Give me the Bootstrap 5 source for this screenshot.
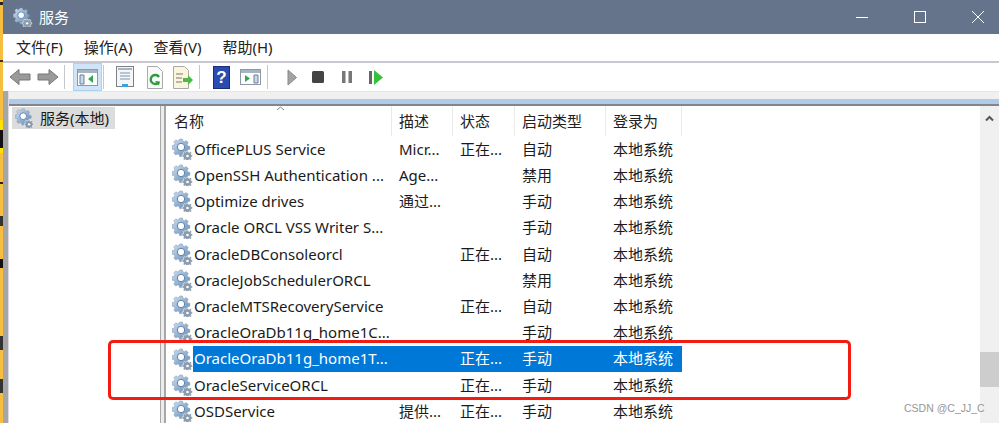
<!DOCTYPE html>
<html lang="zh"><head><meta charset="utf-8"><title>服务</title>
<link href="https://cdn.jsdelivr.net/npm/bootstrap@5.3.0/dist/css/bootstrap.min.css" rel="stylesheet">
<style>
html,body{margin:0;height:423px;overflow:hidden;background:#fff}
body{font-family:"Noto Sans","Noto Sans CJK SC",sans-serif;font-size:15px;color:#1a1a1a;position:relative}
.shell{height:423px;width:999px}
.desk{width:3px;flex:none;background:linear-gradient(#f7bd3e 0,#111 0 0,#f7bd3e 0 2px,#222 2px 5px,#f7bd3e 5px 60px,#333 60px 62px,#f7bd3e 62px 120px,#ffe000 120px 130px,#111 130px 148px,#ffe000 148px 153px,#f7bd3e 153px 182px,#222 182px 184px,#f7bd3e 184px 216px,#333 216px 226px,#f7bd3e 226px 259px,#111 259px 268px,#f7bd3e 268px 336px,#333 336px 350px,#f7bd3e 350px 379px,#333 379px 393px,#f7bd3e 393px)}
.maincol{flex:1 1 auto;min-width:0}
.tbar{height:34px;background:#65748a;color:#fff;font-size:15px;padding-left:10px;gap:6px}
.winbtns svg{display:block}
.winbtns span{width:58px;display:flex;justify-content:center}
.winbtns span:last-child{width:50px;justify-content:flex-start;padding-left:22px}
.menubar{height:27px;gap:21px;padding-left:13px;font-size:15px;color:#222}
.toolrow{height:30px;border-top:2px solid #c9c7cf;padding-left:2px}
.tsep{width:1px;height:24px;background:#c8c8c8;flex:none}
.tico{width:28px;height:28px;display:flex;align-items:center;justify-content:center;flex:none}
.tico.narrow{width:24px}
.tico.wide{width:29px}
.tico.on{background:#cfe5f7;border:1px solid #a9d2f2}
.g1{margin-left:1px}.g2{margin-left:2px}.g3{margin-left:3px}.g4{margin-left:4.5px}.g5{margin-left:5.5px}.g6{margin-left:6px}.g7{margin-left:7px}.g8{margin-left:8px}.g12{margin-left:12px}
.lowerwrap{flex:1 1 auto;min-height:0}
.greybar{width:5px;flex:none;background:#a6a6a8;border-right:0}
.lowercol{flex:1 1 auto;min-width:0;border-left:1px solid #dcdce0}
.stripe{height:8px;background:#f0f0f0;border-top:1px solid #e6e6e6}
.blueb{height:5px;background:#b0cbe7}
.panes{height:319px;border-top:2px solid #84848c}
.leftp{width:151px;padding:0 0 0 3px;flex:none}
.treeitem{height:22px;background:#dcdcdc;margin-top:1px;padding:0 3px 0 3px;gap:5px;width:103px;white-space:nowrap;font-size:15px}
.midgap{width:6px;flex:none;background:#ececee;border-left:1px solid #a8a8a8;border-right:2px solid #a8a8a8}
.rightp{flex:1 1 auto;position:relative;padding-left:5px;overflow:hidden}
.hdr{height:30px;position:relative}
.hcell{height:30px;display:flex;align-items:center;border-right:1px solid #e9e9e9;flex:none;color:#222}
.sortc{position:absolute;left:105px;top:0}
.sortc svg{display:block}
.hcell,.cellx{padding-left:7px}
.hcell.c1{padding-left:3px}
.c1{width:221px}.c2{width:61px}.c3{width:62px}.c4{width:91px}.c5{width:76px}
.rowx{height:26.2px;white-space:nowrap}
.cellx{flex:none;height:100%;display:flex;align-items:center;overflow:hidden}
.c0{width:22px;flex:none;display:flex;align-items:center;padding-left:1px}
.c0 svg{flex:none}
.cn{width:199px;flex:none;padding-left:1px;height:100%;display:flex;align-items:center}
.rowx.sel .cn,.rowx.sel .cellx{background:#0078d7;color:#fff}
.sb{width:19px;flex:none;background:#f0f0f0;position:relative;margin-left:auto}
.sbup{height:24px;display:flex;align-items:center;justify-content:center}
.sbthumb{position:absolute;top:246px;left:0;right:0;height:35px;background:#cdcdcd}
.redbox{position:absolute;left:108px;top:340px;width:743px;height:60px;border:3px solid #f31c12;border-radius:5px;pointer-events:none}
.wm{position:absolute;left:904px;top:401px;font-family:"Liberation Sans",sans-serif;font-size:10.5px;color:#969696}
</style></head><body>
<svg width="0" height="0" class="position-absolute"><defs>
<linearGradient id="gr" x1="0" y1="0" x2="1" y2="1"><stop offset="0" stop-color="#cfe0f2"/><stop offset="1" stop-color="#5f86b3"/></linearGradient>
<symbol id="gear" viewBox="0 0 22 22">
<g fill="url(#gr)" stroke="#7b95b2" stroke-width=".5">
<path d="M7.6 1h2.8l.4 2 1.6.7 1.8-1.1 2 2-1.1 1.8.7 1.6 2 .4v2.8l-2 .4-.7 1.6 1.1 1.8-2 2-1.8-1.1-1.6.7-.4 2H7.6l-.4-2-1.6-.7-1.8 1.1-2-2 1.1-1.8-.7-1.6-2-.4V7.6l2-.4.7-1.6-1.1-1.8 2-2 1.8 1.1 1.6-.7z"/>
</g>
<circle cx="9" cy="9" r="3.7" fill="#fff" stroke="#4f76a0" stroke-width=".9"/>
<path d="M14.6 13.2h1.8l.3 1.2 1-.1.8-.7 1.2 1.2-.7 1 .4 1 1.2.3v1.7l-1.2.3-.4 1 .7 1-1.2 1.2-1-.7-1 .4-.2.6h-1.9l-.2-.6-1-.4-1 .7-1.2-1.2.7-1-.4-1-1.2-.3v-1.7l1.2-.3.4-1-.7-1 1.2-1.2 1 .7 1-.4z" fill="#8a9bad" stroke="#fff" stroke-width=".6"/>
<circle cx="15.5" cy="18" r="1.3" fill="#fff"/>
</symbol>
</defs></svg>
<div class="shell d-flex">
<div class="desk"></div>
<div class="maincol d-flex flex-column">
 <div class="tbar d-flex align-items-center">
  <svg width="20" height="20"><use href="#gear"/></svg><span>服务</span>
  <div class="winbtns d-flex ms-auto align-items-center">
   <span><svg width="14" height="14"><path d="M1 7.500h12" stroke="#fff"/></svg></span>
   <span><svg width="14" height="14"><rect x="1.500" y="1.500" width="11" height="11" fill="none" stroke="#fff"/></svg></span>
   <span><svg width="14" height="14"><path d="M1 1l12 12M13 1L1 13" stroke="#fff"/></svg></span>
  </div>
 </div>
 <div class="menubar d-flex align-items-center"><span>文件(F)</span><span>操作(A)</span><span>查看(V)</span><span>帮助(H)</span></div>
 <div class="toolrow d-flex align-items-center">
  <span class="tico wide"><svg width="22" height="18"><path d="M1 9l9-7.500V6h11v6H10v4.500z" fill="#9a9a9a" stroke="#777"/></svg></span>
  <span class="tico"><svg width="22" height="18"><path d="M21 9l-9-7.500V6H1v6h11v4.500z" fill="#9a9a9a" stroke="#777"/></svg></span>
  <span class="tsep g2"></span>
  <span class="tico wide on g8"><svg width="21" height="19"><rect x=".5" y="1.500" width="20" height="16" fill="#fff" stroke="#8d99a6"/><rect x="1" y="2" width="19" height="3" fill="#a7b4c2"/><path d="M3 7h4v9H3z" fill="#c9d9e9" stroke="#6c7f93"/><path d="M16 7v8l-5-4z" fill="#33a852"/></svg></span>
  <span class="tsep g1"></span>
  <span class="tico wide g6"><svg width="20" height="24"><rect x="1.500" y="1.500" width="17" height="20" fill="#f4f6f8" stroke="#7f7f86"/><rect x="3" y="3" width="14" height="2" fill="#a9b4c0"/><path d="M5 8h10M5 11h10M5 14h10" stroke="#7c96ae"/><rect x="7" y="19" width="6" height="3" fill="#36a3dc"/></svg></span>
  <span class="tico g2"><svg width="18" height="23"><path d="M1.500 .5h10l5 5v17h-15z" fill="#fafafa" stroke="#aaa"/><path d="M13 11a4.500 4.500 0 1 0-1 6" fill="none" stroke="#2d9a3c" stroke-width="2.400"/><path d="M9 15l5 .5-1 4z" fill="#2d9a3c"/></svg></span>
  <span class="tico"><svg width="22" height="23"><path d="M1.500 .5h11l4 4v18h-15z" fill="#fbf5dc" stroke="#aaa"/><path d="M4 8h7M4 12h6M4 16h6" stroke="#777"/><path d="M11 12h5V9l5 5-5 5v-3h-5z" fill="#4fb848"/></svg></span>
  <span class="tsep g2"></span>
  <span class="tico g7"><svg width="17" height="23"><rect x=".5" y=".5" width="16" height="22" fill="#2a4bb0" stroke="#1a2e78"/><text x="8.500" y="17" text-anchor="middle" font-family="Liberation Sans" font-weight="700" font-size="17" fill="#fff">?</text></svg></span>
  <span class="tico g1"><svg width="21" height="18"><rect x=".5" y="1.500" width="20" height="15" fill="#fff" stroke="#8d99a6"/><rect x="1" y="2" width="19" height="3" fill="#a7b4c2"/><path d="M5 7v7l5-3.500z" fill="#33a852"/><path d="M14 7h4v8h-4z" fill="#c9d9e9" stroke="#6c7f93"/></svg></span>
  <span class="tsep g3"></span>
  <span class="tico narrow g12"><svg width="11" height="17"><path d="M1 1l8.500 7.500L1 16z" fill="#a3a3a3" stroke="#8a8a8a"/></svg></span>
  <span class="tico narrow g2"><svg width="14" height="14"><rect x="1" y="1" width="12" height="12" rx="1.500" fill="#444"/></svg></span>
  <span class="tico narrow g4"><svg width="12" height="14"><path d="M1 1h3.500v12H1zM7.500 1H11v12H7.500z" fill="#777"/></svg></span>
  <span class="tico narrow g5"><svg width="16" height="15"><path d="M1 1h3v13H1z" fill="#666"/><path d="M6 0l9 7.500L6 15z" fill="#37c13a"/></svg></span>
 </div>
 <div class="lowerwrap d-flex">
 <div class="greybar"></div>
 <div class="lowercol d-flex flex-column">
 <div class="stripe"></div>
 <div class="blueb"></div>
 <div class="panes d-flex">
  <div class="leftp"><div class="treeitem d-flex align-items-center"><svg width="20" height="20"><use href="#gear"/></svg><span>服务(本地)</span></div></div>
  <div class="midgap"></div>
  <div class="rightp d-flex">
   <div class="flex-grow-1">
    <div class="hdr d-flex"><span class="sortc"><svg width="9" height="5"><path d="M1 4l3.500-3L8 4" fill="none" stroke="#888"/></svg></span>
     <div class="hcell c1">名称</div><div class="hcell c2">描述</div><div class="hcell c3">状态</div><div class="hcell c4">启动类型</div><div class="hcell c5">登录为</div></div>
    <div class="rowx d-flex"><div class="c0"><svg width="22" height="22"><use href="#gear"/></svg></div><div class="cn">OfficePLUS Service</div><div class="cellx c2">Micr...</div><div class="cellx c3">正在...</div><div class="cellx c4">自动</div><div class="cellx c5">本地系统</div></div>
    <div class="rowx d-flex"><div class="c0"><svg width="22" height="22"><use href="#gear"/></svg></div><div class="cn">OpenSSH Authentication ...</div><div class="cellx c2">Age...</div><div class="cellx c3"></div><div class="cellx c4">禁用</div><div class="cellx c5">本地系统</div></div>
    <div class="rowx d-flex"><div class="c0"><svg width="22" height="22"><use href="#gear"/></svg></div><div class="cn">Optimize drives</div><div class="cellx c2">通过...</div><div class="cellx c3"></div><div class="cellx c4">手动</div><div class="cellx c5">本地系统</div></div>
    <div class="rowx d-flex"><div class="c0"><svg width="22" height="22"><use href="#gear"/></svg></div><div class="cn">Oracle ORCL VSS Writer S...</div><div class="cellx c2"></div><div class="cellx c3"></div><div class="cellx c4">手动</div><div class="cellx c5">本地系统</div></div>
    <div class="rowx d-flex"><div class="c0"><svg width="22" height="22"><use href="#gear"/></svg></div><div class="cn">OracleDBConsoleorcl</div><div class="cellx c2"></div><div class="cellx c3">正在...</div><div class="cellx c4">自动</div><div class="cellx c5">本地系统</div></div>
    <div class="rowx d-flex"><div class="c0"><svg width="22" height="22"><use href="#gear"/></svg></div><div class="cn">OracleJobSchedulerORCL</div><div class="cellx c2"></div><div class="cellx c3"></div><div class="cellx c4">禁用</div><div class="cellx c5">本地系统</div></div>
    <div class="rowx d-flex"><div class="c0"><svg width="22" height="22"><use href="#gear"/></svg></div><div class="cn">OracleMTSRecoveryService</div><div class="cellx c2"></div><div class="cellx c3">正在...</div><div class="cellx c4">自动</div><div class="cellx c5">本地系统</div></div>
    <div class="rowx d-flex"><div class="c0"><svg width="22" height="22"><use href="#gear"/></svg></div><div class="cn">OracleOraDb11g_home1C...</div><div class="cellx c2"></div><div class="cellx c3"></div><div class="cellx c4">手动</div><div class="cellx c5">本地系统</div></div>
    <div class="rowx sel d-flex"><div class="c0"><svg width="22" height="22"><use href="#gear"/></svg></div><div class="cn">OracleOraDb11g_home1T...</div><div class="cellx c2"></div><div class="cellx c3">正在...</div><div class="cellx c4">手动</div><div class="cellx c5">本地系统</div></div>
    <div class="rowx d-flex"><div class="c0"><svg width="22" height="22"><use href="#gear"/></svg></div><div class="cn">OracleServiceORCL</div><div class="cellx c2"></div><div class="cellx c3">正在...</div><div class="cellx c4">手动</div><div class="cellx c5">本地系统</div></div>
    <div class="rowx d-flex"><div class="c0"><svg width="22" height="22"><use href="#gear"/></svg></div><div class="cn">OSDService</div><div class="cellx c2">提供...</div><div class="cellx c3">正在...</div><div class="cellx c4">手动</div><div class="cellx c5">本地系统</div></div>
   </div>
   <div class="sb"><div class="sbup"><svg width="9" height="7"><path d="M1 5.500l3.500-3.500L8 5.500" fill="none" stroke="#555" stroke-width="2"/></svg></div><div class="sbthumb"></div></div>
  </div>
 </div>
 </div>
 </div>
</div>
</div>
<div class="redbox"></div>
<div class="wm">CSDN @C_JJ_C</div>
</body></html>
